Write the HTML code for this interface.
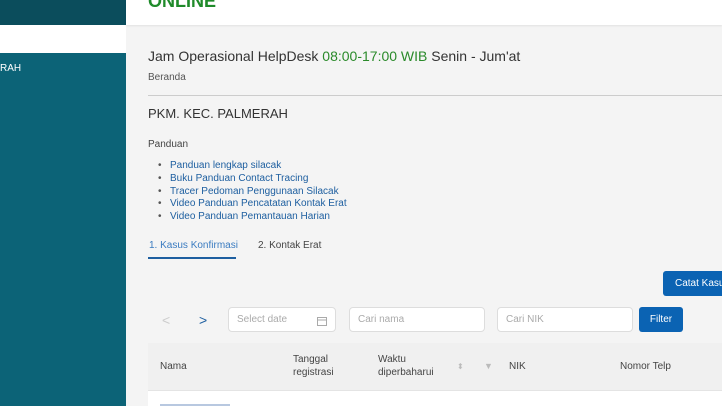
<!DOCTYPE html>
<html><head><meta charset="utf-8"><style>
*{box-sizing:border-box;margin:0;padding:0}
body{width:722px;height:406px;overflow:hidden;background:#f4f4f4;font-family:"Liberation Sans",sans-serif;position:relative}
.sb{position:absolute;left:0;top:0;width:126px;height:406px;background:#0c6377}
.sbtop{position:absolute;left:0;top:0;width:126px;height:25px;background:#0b4d5c}
.sbw{position:absolute;left:0;top:25px;width:126px;height:28px;background:#fff}
.sbt{position:absolute;left:0;top:63px;color:#fff;font-size:10px}
.hdr{position:absolute;left:126px;top:0;width:596px;height:25px;background:#fff;box-shadow:0 1px 2px rgba(0,0,0,.08);overflow:hidden}
.hdr span{position:absolute;left:22px;top:-9px;font-size:18px;font-weight:bold;color:#1f8a2a}
.t{position:absolute;white-space:nowrap}
a{color:#1e5fa0;text-decoration:none}
ul{position:absolute;left:170px;top:160px;font-size:10px;line-height:12.8px;list-style:none;white-space:nowrap}
ul li::before{content:"•";position:absolute;left:-12px;color:#555}
ul li{position:relative}
.inp{position:absolute;top:307px;height:25px;border:1px solid #ddd;border-radius:4px;background:#fff;font-size:10px;color:#aaa;padding:6px 8px}
.btn{position:absolute;background:#0b63b3;color:#fff;font-size:10px;border-radius:3px;text-align:center;white-space:nowrap}
.th{position:absolute;font-size:10px;color:#444;line-height:13px}
</style></head><body>
<div class="sb"></div><div class="sbtop"></div><div class="sbw"></div>
<div class="sbt">RAH</div>
<div class="hdr"><span>ONLINE</span></div>
<div class="t" style="left:148px;top:48px;font-size:14px;color:#333">Jam Operasional HelpDesk <span style="color:#2a8a2a">08:00-17:00 WIB</span> Senin - Jum'at</div>
<div class="t" style="left:148px;top:72px;font-size:10px;color:#555">Beranda</div>
<div style="position:absolute;left:148px;top:95px;width:574px;height:1px;background:#ccc"></div>
<div class="t" style="left:148px;top:106px;font-size:13px;color:#333">PKM. KEC. PALMERAH</div>
<div class="t" style="left:148px;top:139px;font-size:10px;color:#444">Panduan</div>
<ul>
<li><a>Panduan lengkap silacak</a></li>
<li><a>Buku Panduan Contact Tracing</a></li>
<li><a>Tracer Pedoman Penggunaan Silacak</a></li>
<li><a>Video Panduan Pencatatan Kontak Erat</a></li>
<li><a>Video Panduan Pemantauan Harian</a></li>
</ul>
<div class="t" style="left:149px;top:240px;font-size:10px;color:#3a7bc0">1. Kasus Konfirmasi</div>
<div style="position:absolute;left:148px;top:257px;width:88px;height:2px;background:#1e5fa0"></div>
<div class="t" style="left:258px;top:240px;font-size:10px;color:#444">2. Kontak Erat</div>
<div class="btn" style="left:663px;top:271px;width:70px;height:25px;line-height:25px;text-align:left;padding-left:12px">Catat Kasus</div>
<div class="t" style="left:162px;top:312px;font-size:14px;color:#ccc">&lt;</div>
<div class="t" style="left:199px;top:312px;font-size:14px;color:#1e5fa0">&gt;</div>
<div class="inp" style="left:228px;width:108px">Select date<svg style="position:absolute;right:8px;top:8px" width="10" height="10" viewBox="0 0 10 10"><rect x="0.5" y="1.5" width="9" height="8" fill="none" stroke="#aaa"/><line x1="0" y1="4" x2="10" y2="4" stroke="#aaa"/></svg></div>
<div class="inp" style="left:349px;width:136px">Cari nama</div>
<div class="inp" style="left:497px;width:136px">Cari NIK</div>
<div class="btn" style="left:639px;top:307px;width:44px;height:25px;line-height:25px">Filter</div>
<div style="position:absolute;left:148px;top:343px;width:574px;height:48px;background:#f0f0f0;border-bottom:1px solid #e4e4e4"></div>
<div style="position:absolute;left:148px;top:391px;width:574px;height:15px;background:#fff"></div>
<div class="th" style="left:160px;top:360px">Nama</div>
<div class="th" style="left:293px;top:353px">Tanggal<br>registrasi</div>
<div class="th" style="left:378px;top:353px">Waktu<br>diperbaharui</div>
<div class="th" style="left:457px;top:360px;color:#bbb;font-size:8px">⬍</div>
<div class="th" style="left:484px;top:360px;color:#bbb;font-size:9px">▼</div>
<div class="th" style="left:509px;top:360px">NIK</div>
<div class="th" style="left:620px;top:360px">Nomor Telp</div>
<div style="position:absolute;left:160px;top:404px;width:70px;height:2px;background:#b8c8e0"></div>
</body></html>
